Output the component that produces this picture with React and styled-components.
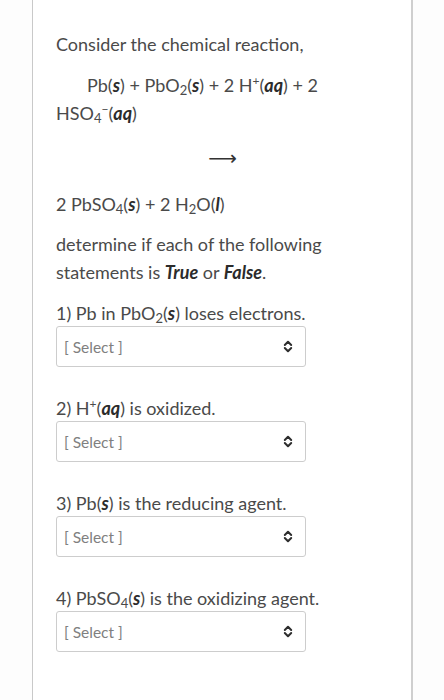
import styled, { createGlobalStyle } from 'styled-components';

const GlobalStyle = createGlobalStyle`
  body {
    margin: 0;
    background: #fdfdfd;
  }
`;

const Page = styled.div`
  margin-left: 32px;
  width: 381px;
  min-height: 700px;
  box-sizing: border-box;
  border-left: 1px solid #c9c9c9;
  border-right: 2px solid #cfcfcf;
  padding: 30px 22px 0 23px;
  background: #fff;
  font-family: Lato, "Liberation Sans", sans-serif;
  font-size: 18px;
  color: #4a4a4a;
`;

const Para = styled.p`
  margin: ${(p) => p.$top || 0}px 0 0;
  line-height: 28px;
  text-align: ${(p) => (p.$center ? 'center' : 'left')};
`;

const Indent = styled.span`
  padding-left: 31px;
`;

const NoWrap = styled.span`
  white-space: nowrap;
`;

const Arrow = styled.span`
  font-family: "DejaVu Sans", sans-serif;
  font-size: 20px;
  color: #333;
`;

const Em = styled.b`
  font-style: italic;
  font-weight: 700;
  color: #2b2b2b;
`;

const Sub = styled.sub`
  font-size: 13px;
  line-height: 0;
  vertical-align: -3px;
`;

const Sup = styled.sup`
  font-size: 12px;
  line-height: 0;
  vertical-align: 7px;
`;

const Question = styled.div`
  margin-top: ${(p) => p.$top}px;
`;

const Label = styled.div`
  line-height: 26px;
`;

const SelectBox = styled.div`
  width: 250px;
  height: 41px;
  box-sizing: border-box;
  border: 1px solid #cdcdcd;
  border-radius: 3px;
  background: #fff;
  display: flex;
  align-items: center;
  justify-content: space-between;
  padding: 0 12px 0 7px;
  font-size: 15.5px;
  color: #808080;
`;

const Chevrons = () => (
  <svg width="10" height="13" viewBox="0 0 10 13" fill="none" stroke="#2e2e2e" strokeWidth="2" strokeLinecap="round" strokeLinejoin="round">
    <path d="M1.8 5 L5 1.8 L8.2 5" />
    <path d="M1.8 8 L5 11.2 L8.2 8" />
  </svg>
);

const Select = () => (
  <SelectBox>
    <span>[ Select ]</span>
    <Chevrons />
  </SelectBox>
);

const questions = [
  { top: 14, label: <>1) Pb in PbO<Sub>2</Sub>(<Em>s</Em>) loses electrons.</> },
  { top: 28, label: <>2) H<Sup>+</Sup>(<Em>aq</Em>) is oxidized.</> },
  { top: 28, label: <>3) Pb(<Em>s</Em>) is the reducing agent.</> },
  { top: 28, label: <>4) PbSO<Sub>4</Sub>(<Em>s</Em>) is the oxidizing agent.</> },
];

export default function App() {
  return (
    <>
      <GlobalStyle />
      <Page>
        <Para>Consider the chemical reaction,</Para>
        <Para $top={13}>
          <Indent />
          Pb(<Em>s</Em>) + PbO<Sub>2</Sub>(<Em>s</Em>) + 2 H<Sup>+</Sup>(<Em>aq</Em>) + 2{' '}
          <NoWrap>
            HSO<Sub>4</Sub>
            <Sup>−</Sup>(<Em>aq</Em>)
          </NoWrap>
        </Para>
        <Para $top={17} $center>
          <Arrow>⟶</Arrow>
        </Para>
        <Para $top={18}>
          2 PbSO<Sub>4</Sub>(<Em>s</Em>) + 2 H<Sub>2</Sub>O(<Em>l</Em>)
        </Para>
        <Para $top={12}>
          determine if each of the following statements is <Em>True</Em> or <Em>False</Em>.
        </Para>
        {questions.map((q, i) => (
          <Question key={i} $top={q.top}>
            <Label>{q.label}</Label>
            <Select />
          </Question>
        ))}
      </Page>
    </>
  );
}
